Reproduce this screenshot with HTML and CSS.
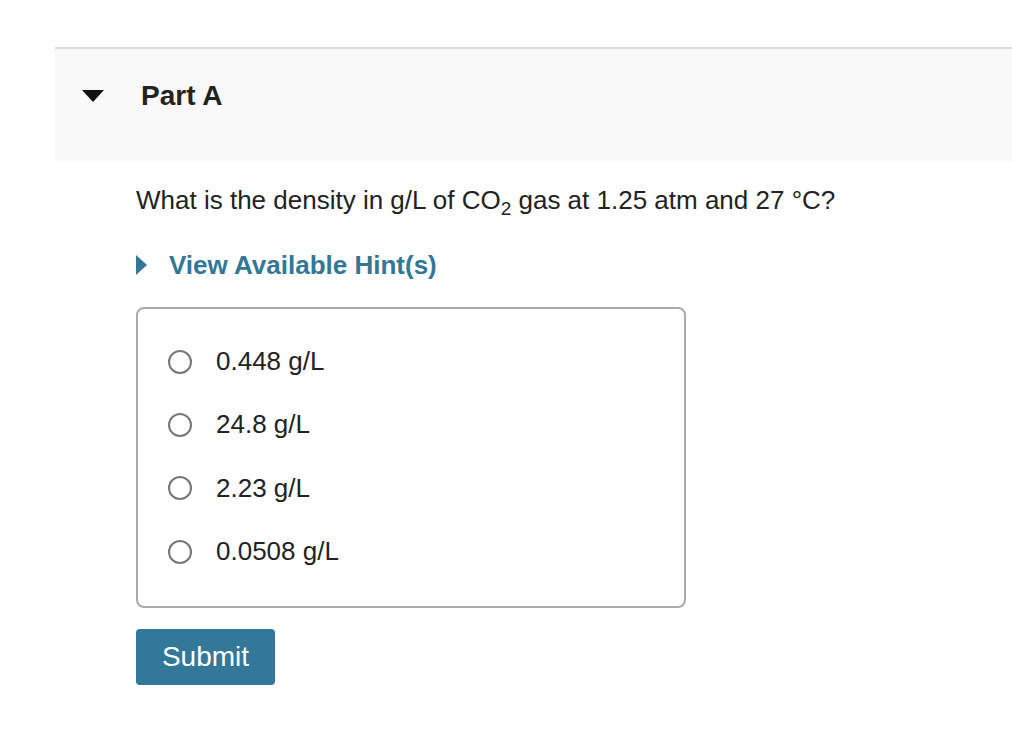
FILE: index.html
```html
<!DOCTYPE html>
<html lang="en">
<head>
    <meta charset="UTF-8">
    <title>Part A</title>
    <link rel="stylesheet" href="styles.css">
</head>
<body>
    <div class="part">
        <div class="part-header">
            <span class="caret-down"></span>
            <h2>Part A</h2>
        </div>
        <div class="part-body">
            <p class="question">What is the density in g/L of CO<sub>2</sub> gas at 1.25 atm and 27 &deg;C?</p>
            <a href="#" class="hint"><span class="caret-right"></span>View Available Hint(s)</a>
            <div class="choices">
                <label class="choice"><span class="radio"></span>0.448 g/L</label>
                <label class="choice"><span class="radio"></span>24.8 g/L</label>
                <label class="choice"><span class="radio"></span>2.23 g/L</label>
                <label class="choice"><span class="radio"></span>0.0508 g/L</label>
            </div>
            <button class="btn">Submit</button>
        </div>
    </div>
</body>
</html>
```

FILE: styles.css
```css
body {
    margin: 0;
    padding: 0;
    background-color: #fff;
    font-family: "Liberation Sans", Arial, sans-serif;
    color: #222;
}
.part {
    margin: 47px 0 0 55px;
    border-top: 2px solid #dedede;
}
.part-header {
    display: flex;
    align-items: flex-start;
    height: 112px;
    box-sizing: border-box;
    padding-top: 31px;
    background-color: #f9f9f9;
}
.caret-down {
    width: 0;
    height: 0;
    margin: 10px 0 0 27px;
    border-left: 11px solid transparent;
    border-right: 11px solid transparent;
    border-top: 12px solid #111;
}
.part-header h2 {
    margin: 0 0 0 37px;
    font-size: 28px;
    line-height: 32px;
    font-weight: bold;
    color: #222;
}
.part-body {
    padding: 23px 0 0 81px;
}
.question {
    margin: 0;
    font-size: 26px;
    line-height: 32px;
    color: #222;
}
.question sub {
    font-size: 19px;
    vertical-align: -6px;
    line-height: 0;
}
.hint {
    display: flex;
    align-items: center;
    width: max-content;
    margin-top: 33px;
    font-size: 26px;
    line-height: 32px;
    font-weight: bold;
    color: #337797;
    text-decoration: none;
}
.caret-right {
    width: 0;
    height: 0;
    margin-right: 22px;
    border-top: 10px solid transparent;
    border-bottom: 10px solid transparent;
    border-left: 11px solid #337797;
}
.choices {
    width: 550px;
    height: 301px;
    margin-top: 26px;
    padding: 21px 0 22px 0;
    border: 2px solid #aaa;
    border-radius: 8px;
    box-sizing: border-box;
    display: flex;
    flex-direction: column;
}
.choice {
    display: flex;
    align-items: center;
    height: 63.33px;
    padding-left: 30px;
    font-size: 26px;
    color: #222;
}
.radio {
    width: 20px;
    height: 20px;
    border: 2px solid #777;
    border-radius: 50%;
    margin-right: 24px;
    background-color: #fff;
}
.btn {
    display: block;
    margin-top: 21px;
    width: 139px;
    height: 56px;
    padding: 0;
    background-color: #347899;
    color: #fff;
    border: none;
    border-radius: 4px;
    font-family: "Liberation Sans", Arial, sans-serif;
    font-size: 28px;
    cursor: pointer;
}
```
